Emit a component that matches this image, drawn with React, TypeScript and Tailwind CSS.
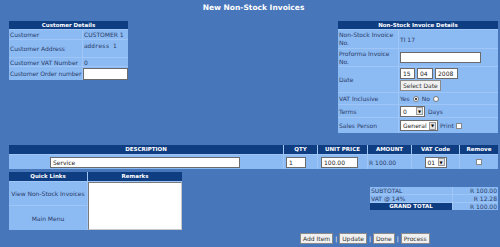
import React from 'react';

const cell = 'bg-[#8cbaf2] flex items-center px-px text-[#2a3a6a] whitespace-nowrap overflow-hidden';
const head = 'bg-[#0f3d82] flex items-center justify-center text-white font-bold text-[5.5px] whitespace-nowrap';

const Select = ({ value, className }: { value: string; className: string }) => (
  <div className={`flex items-center h-[11px] bg-white border border-[#6b6b6b] ${className}`}>
    <span className="flex-1 px-[2px] text-[#222]">{value}</span>
    <span className="w-[7px] h-[8px] mr-px bg-[#e2e2e2] border border-[#9a9a9a] flex items-center justify-center text-[4px] text-black">▼</span>
  </div>
);

const Box = ({ value, className }: { value?: string; className: string }) => (
  <div className={`h-[11px] bg-white border border-[#6b6b6b] flex items-center px-[2px] text-[#222] ${className}`}>{value}</div>
);

const Btn = ({ label }: { label: string }) => (
  <div className="h-[11px] px-[2px] bg-[#f0f0f0] border border-[#8a8a8a] flex items-center text-[6px] text-[#333] whitespace-nowrap">{label}</div>
);

const Check = () => <span className="inline-block w-[6px] h-[6px] bg-white border border-[#888]" />;

export default function App() {
  return (
    <div className="w-[500px] h-[247px] bg-[#4876bb] pl-[9px] pr-[2px] font-['DejaVu_Sans',sans-serif] text-[6px] leading-[7px] overflow-hidden">
      <div className="h-[14px] pt-[4px] text-center text-white font-bold text-[7.5px] leading-[8px]">New Non-Stock Invoices</div>

      {/* top tables */}
      <div className="flex justify-between items-start mt-[7px] h-[124px]">
        <div className="w-[119px] grid grid-cols-[73px_45px] grid-rows-[8px_9px_17px_8px_13px] gap-px bg-[#9fc6f6]">
          <div className={`${head} col-span-2`}>Customer Details</div>
          <div className={cell}>Customer</div>
          <div className={cell}>CUSTOMER 1</div>
          <div className={cell}>Customer Address</div>
          <div className={`${cell} items-start pt-[2px] font-['DejaVu_Sans_Mono',monospace]`}>address 1</div>
          <div className={cell}>Customer VAT Number</div>
          <div className={cell}>0</div>
          <div className={`${cell} tracking-[-0.1px]`}>Customer Order number</div>
          <div className="bg-[#8cbaf2] flex items-center">
            <Box className="w-[45px] h-[12px]" />
          </div>
        </div>

        <div className="w-[160px] grid grid-cols-[60px_99px] grid-rows-[8px_18px_17px_25px_11px_12px_15px] gap-px bg-[#9fc6f6]">
          <div className={`${head} col-span-2`}>Non-Stock Invoice Details</div>
          <div className={`${cell} leading-[8px]`}>Non-Stock Invoice<br />No.</div>
          <div className={cell}>TI 17</div>
          <div className={`${cell} leading-[8px]`}>Proforma Invoice<br />No.</div>
          <div className={cell}>
            <Box className="w-[81px]" />
          </div>
          <div className={cell}>Date</div>
          <div className="bg-[#8cbaf2] flex flex-col gap-px px-px pt-px">
            <div className="flex gap-[2px]">
              <Box value="15" className="w-[15px]" />
              <Box value="04" className="w-[16px]" />
              <Box value="2008" className="w-[23px]" />
            </div>
            <div className="w-[41px]">
              <Btn label="Select Date" />
            </div>
          </div>
          <div className={cell}>VAT Inclusive</div>
          <div className={`${cell} gap-[3px]`}>
            <span>Yes</span>
            <span className="w-[6px] h-[6px] rounded-full bg-white border border-[#777] flex items-center justify-center">
              <span className="w-[2px] h-[2px] rounded-full bg-black" />
            </span>
            <span>No</span>
            <span className="w-[6px] h-[6px] rounded-full bg-white border border-[#777]" />
          </div>
          <div className={cell}>Terms</div>
          <div className={`${cell} gap-[3px]`}>
            <Select value="0" className="w-[25px]" />
            <span>Days</span>
          </div>
          <div className={cell}>Sales Person</div>
          <div className={`${cell} gap-[2px]`}>
            <Select value="General" className="w-[38px]" />
            <span>Print</span>
            <Check />
          </div>
        </div>
      </div>

      {/* line items */}
      <div className="w-[489px] grid grid-cols-[274px_33px_49px_43px_47px_38px] grid-rows-[9px_14px] gap-px bg-[#9fc6f6]">
        <div className={head}>DESCRIPTION</div>
        <div className={head}>QTY</div>
        <div className={head}>UNIT PRICE</div>
        <div className={head}>AMOUNT</div>
        <div className={head}>VAT Code</div>
        <div className={head}>Remove</div>
        <div className={`${cell} pl-[41px]`}>
          <Box value="Service" className="w-[190px]" />
        </div>
        <div className={`${cell} pl-[2px]`}>
          <Box value="1" className="w-[20px]" />
        </div>
        <div className={`${cell} pl-[3px]`}>
          <Box value="100.00" className="w-[37px]" />
        </div>
        <div className={cell}>R 100.00</div>
        <div className={`${cell} justify-center`}>
          <Select value="01" className="w-[22px]" />
        </div>
        <div className={`${cell} justify-center`}>
          <Check />
        </div>
      </div>

      {/* quick links + totals */}
      <div className="flex items-start mt-[3px]">
        <div className="w-[173px] grid grid-cols-[78px_94px] grid-rows-[9px_23px_24px] gap-px bg-[#9fc6f6]">
          <div className={head}>Quick Links</div>
          <div className={head}>Remarks</div>
          <div className={`${cell} justify-center text-[#1f3fa8]`}>View Non-Stock Invoices</div>
          <div className="row-span-2 bg-white border border-[#7a7a7a] border-r-[#c8c8c8] border-b-[#c8c8c8]" />
          <div className={`${cell} justify-center text-[#1f3fa8]`}>Main Menu</div>
        </div>

        <div className="ml-[188px] mt-[15px] w-[128px] grid grid-cols-[82px_45px] grid-rows-[7px_7px_7px] gap-px bg-[#9fc6f6]">
          <div className={cell}>SUBTOTAL</div>
          <div className={`${cell} justify-end`}>R 100.00</div>
          <div className={cell}>VAT @ 14%</div>
          <div className={`${cell} justify-end`}>R 12.28</div>
          <div className={head}>GRAND TOTAL</div>
          <div className={`${cell} justify-end`}>R 100.00</div>
        </div>
      </div>

      {/* buttons */}
      <div className="flex items-center gap-[2px] ml-[291px] mt-[3px] text-white">
        <Btn label="Add Item" />
        <span>|</span>
        <Btn label="Update" />
        <span>|</span>
        <Btn label="Done" />
        <span>|</span>
        <Btn label="Process" />
      </div>
    </div>
  );
}
